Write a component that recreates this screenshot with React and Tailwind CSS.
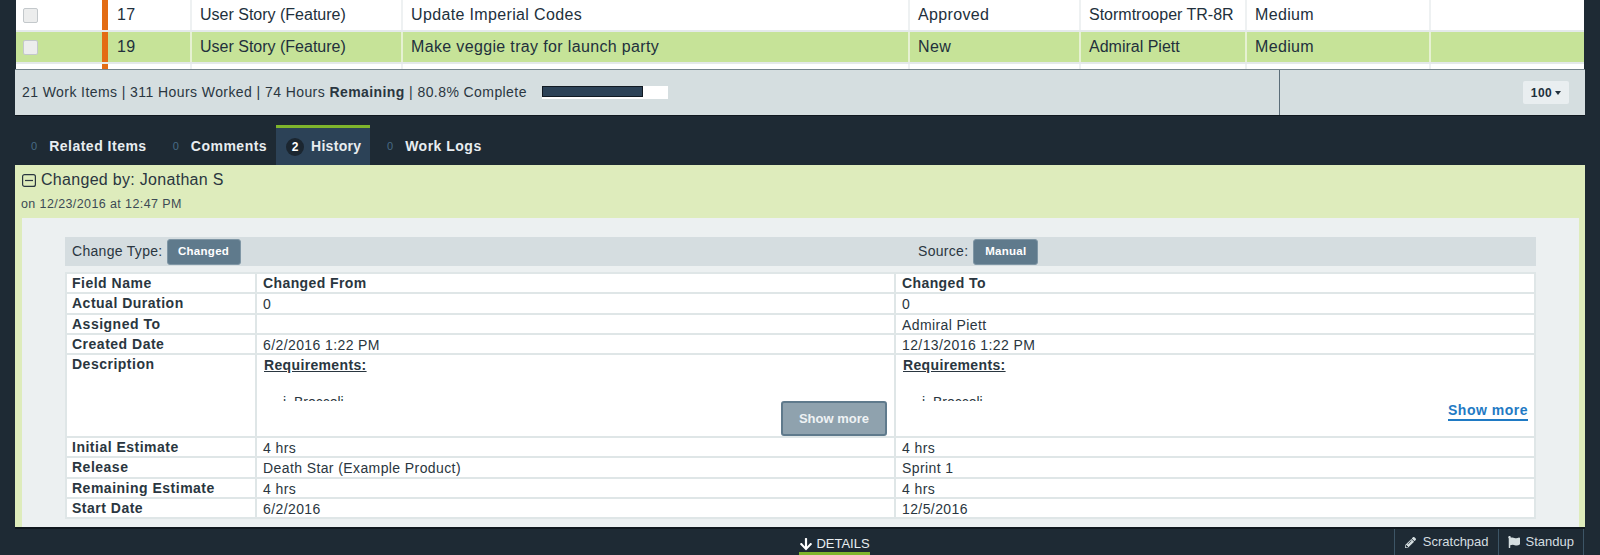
import { FaArrowDown, FaFlag, FaPencilAlt } from "react-icons/fa";

const font = { fontFamily: '"Liberation Sans", Arial, sans-serif' };

const workItems = [
  { id: 17, type: "User Story (Feature)", title: "Update Imperial Codes", status: "Approved", owner: "Stormtrooper TR-8R", priority: "Medium" },
  { id: 19, type: "User Story (Feature)", title: "Make veggie tray for launch party", status: "New", owner: "Admiral Piett", priority: "Medium", active: true },
];

const gridCols = "grid grid-cols-[86px_6px_82px_211px_507px_171px_166px_184px_155px]";

function WorkRow({ item }) {
  const cell = "flex items-center pl-2 border-l-2 border-[#eef1f2]";
  const activeCell = "flex items-center pl-2 border-l-2 border-[#e6f1d2]";
  const c = item.active ? activeCell : cell;
  return (
    <div className={`${gridCols} h-[32px] border-b-2 border-[#e4e9ea] text-[16px] tracking-[0.35px] text-[#22303c] ${item.active ? "bg-[#c6e398]" : "bg-white"}`}>
      <div className="flex items-center pl-[7px]">
        <span className="h-[15px] w-[15px] rounded-[2px] border border-[#c3c8cb] bg-[#eceded]" />
      </div>
      <div className="bg-[#e36c14]" />
      <div className="flex items-center pl-[9px]">{item.id}</div>
      <div className={`${c} tracking-normal`}>{item.type}</div>
      <div className={c}>{item.title}</div>
      <div className={c}>{item.status}</div>
      <div className={`${c} tracking-normal`}>{item.owner}</div>
      <div className={c}>{item.priority}</div>
      <div className={c} />
    </div>
  );
}

function Tab({ count, label, active }) {
  if (active) {
    return (
      <div className="flex h-[40px] w-[94px] items-center border-t-[3px] border-[#7fb52c] bg-[#2c4257] pl-[10px]">
        <span className="flex h-[18px] w-[18px] items-center justify-center rounded-full bg-[#1b2630] text-[12px] font-bold text-white">{count}</span>
        <span className="ml-[7px] text-[14px] font-bold tracking-[0.3px] text-[#e8edf0]">{label}</span>
      </div>
    );
  }
  return (
    <div className="flex h-[37px] items-center">
      <span className="text-[11px] text-[#486a85]">{count}</span>
      <span className="ml-[12px] text-[14px] font-bold tracking-[0.5px] text-[#e8edf0]">{label}</span>
    </div>
  );
}

function HistoryRow({ label, from, to, height = "h-[20.3px]", bold }) {
  return (
    <div className={`grid grid-cols-[188px_639px_1fr] border-b-2 border-[#dfe6e7] text-[14px] tracking-[0.4px] text-[#2a3640] ${height}`}>
      <div className="truncate pl-[5px] font-bold leading-[19px] tracking-[0.5px]">{label}</div>
      <div className={`border-l-2 border-[#dfe6e7] pl-[6px] ${bold ? "font-bold leading-[19px]" : "leading-[20px]"}`}>{from}</div>
      <div className={`border-l-2 border-[#dfe6e7] pl-[6px] ${bold ? "font-bold leading-[19px]" : "leading-[20px]"}`}>{to}</div>
    </div>
  );
}

function Requirements() {
  return (
    <div className="h-[46px] overflow-hidden pl-[1px] pt-[1px]">
      <p className="text-[14px] font-bold leading-[18px] tracking-[0.35px] text-[#2a3640] underline">Requirements:</p>
      <p className="mt-[20px] pl-[19px] text-[14px] leading-[16px] tracking-normal">i&nbsp; Broccoli</p>
    </div>
  );
}

export default function App() {
  return (
    <div style={font} className="relative flex h-[555px] w-[1600px] flex-col overflow-hidden bg-[#1e2a34]">
      <div className="ml-[16px] mr-[16px] h-[69px] overflow-hidden bg-white">
        {workItems.map((item) => (
          <WorkRow key={item.id} item={item} />
        ))}
        <div className={`${gridCols} h-[5px]`}>
          <div />
          <div className="bg-[#e36c14]" />
          <div />
          <div className="border-l-2 border-[#eef1f2]" />
          <div className="border-l-2 border-[#eef1f2]" />
          <div className="border-l-2 border-[#eef1f2]" />
          <div className="border-l-2 border-[#eef1f2]" />
          <div className="border-l-2 border-[#eef1f2]" />
          <div className="border-l-2 border-[#eef1f2]" />
        </div>
      </div>

      <div className="mx-[15px] flex h-[47px] border-y border-[#76858e] border-b-[#10181f] bg-[#d5dee0] text-[14px] tracking-[0.42px] text-[#2a3640]">
        <div className="flex w-[1264px] items-center pl-[7px]">
          <span>
            21 Work Items | 311 Hours Worked | 74 Hours <b>Remaining</b> | 80.8% Complete
          </span>
          <div className="ml-[15px] h-[13px] w-[126px] bg-white">
            <div className="h-[11px] w-[101px] border border-[#111a23] bg-[#2c4257]" />
          </div>
        </div>
        <div className="flex flex-1 items-center justify-end border-l border-[#5b6d79] pr-[16px]">
          <div className="flex h-[23px] w-[46px] items-center justify-center gap-[3px] rounded-[2px] bg-[#e9eef0] text-[12px] font-bold text-[#22303c]">
            100
            <span className="h-0 w-0 border-x-[3px] border-t-[4px] border-x-transparent border-t-[#22303c]" />
          </div>
        </div>
      </div>

      <div className="mt-[9px] flex h-[40px] items-end pl-[31px]">
        <div className="flex w-[245px] gap-[26px]">
          <Tab count={0} label="Related Items" />
          <Tab count={0} label="Comments" />
        </div>
        <Tab count={2} label="History" active />
        <div className="ml-[17px]">
          <Tab count={0} label="Work Logs" />
        </div>
      </div>

      <div className="mx-[15px] flex h-[364px] flex-col border-b-2 border-[#10181f] bg-[#deecbc] pl-[7px] pr-[6px]">
        <div className="flex h-[28px] items-center pt-[2px] text-[16px] tracking-[0.3px] text-[#2a3640]">
          <svg width="14" height="13" viewBox="0 0 14 13" fill="none" stroke="#2a3640" strokeWidth="1.2">
            <rect x="0.6" y="0.6" width="12.8" height="11.8" rx="2" />
            <path d="M3 6.5h8" />
          </svg>
          <span className="ml-[5px]">Changed by: Jonathan S</span>
        </div>
        <div className="-ml-px h-[25px] text-[12.5px] leading-[22px] tracking-[0.4px] text-[#3c4a55]">on 12/23/2016 at 12:47 PM</div>

        <div className="flex-1 bg-[#ecf0f1] pl-[43px] pr-[43px] pt-[19px]">
          <div className="flex h-[29px] items-center bg-[#d5dde0] pl-[7px] text-[14px] tracking-[0.3px] text-[#2a3640]">
            <div className="flex w-[846px] items-center">
              <span>Change Type:</span>
              <span className="ml-[4px] flex h-[26px] w-[74px] items-center justify-center rounded-[3px] border border-[#7f96a5] bg-[#5f7a8c] text-[11.5px] font-bold text-white">Changed</span>
            </div>
            <span>Source:</span>
            <span className="ml-[5px] flex h-[26px] w-[65px] items-center justify-center rounded-[3px] border border-[#7f96a5] bg-[#5f7a8c] text-[11.5px] font-bold text-white">Manual</span>
          </div>

          <div className="relative mt-[6px] border-x-2 border-t-2 border-[#dfe6e7] bg-white">
            <HistoryRow label="Field Name" from="Changed From" to="Changed To" bold />
            <HistoryRow label="Actual Duration" from="0" to="0" />
            <HistoryRow label="Assigned To" from="" to="Admiral Piett" />
            <HistoryRow label="Created Date" from="6/2/2016 1:22 PM" to="12/13/2016 1:22 PM" />
            <HistoryRow label="Description" from={<Requirements />} to={<Requirements />} height="h-[83px]" />
            <HistoryRow label="Initial Estimate" from="4 hrs" to="4 hrs" />
            <HistoryRow label="Release" from="Death Star (Example Product)" to="Sprint 1" />
            <HistoryRow label="Remaining Estimate" from="4 hrs" to="4 hrs" />
            <HistoryRow label="Start Date" from="6/2/2016" to="12/5/2016" />
            <button className="absolute left-[714px] top-[127px] h-[35px] w-[106px] rounded-[3px] border-2 border-[#5f7a8c] bg-[#8fa2ae] text-[13px] font-bold text-[#eef2f4]">Show more</button>
            <button className="absolute right-[6px] top-[127px] border-b-2 border-[#1f7ac4] text-[14px] font-bold leading-[18px] tracking-[0.5px] text-[#1f7ac4]">Show more</button>
          </div>
        </div>
      </div>

      <div className="relative flex flex-1 justify-end pr-[16px]">
        <div className="absolute left-[799px] top-0 flex h-[26px] w-[71px] items-start justify-center gap-[3px] border-b-[3px] border-[#7fb52c] pt-[8px] text-[13px] leading-[13px] text-[#e8edf0]">
          <FaArrowDown className="h-[14px] w-[14px] text-white" />
          DETAILS
        </div>
        <div className="flex h-full items-center gap-[7px] border-l border-[#3d5566] pl-[10px] pr-[9px] text-[13px] text-[#d5dee0]">
          <FaPencilAlt className="h-[11px] w-[11px]" />
          Scratchpad
        </div>
        <div className="flex h-full items-center gap-[6px] border-x border-[#3d5566] pl-[9px] pr-[9px] text-[13px] text-[#d5dee0]">
          <FaFlag className="h-[12px] w-[12px]" />
          Standup
        </div>
      </div>
    </div>
  );
}
